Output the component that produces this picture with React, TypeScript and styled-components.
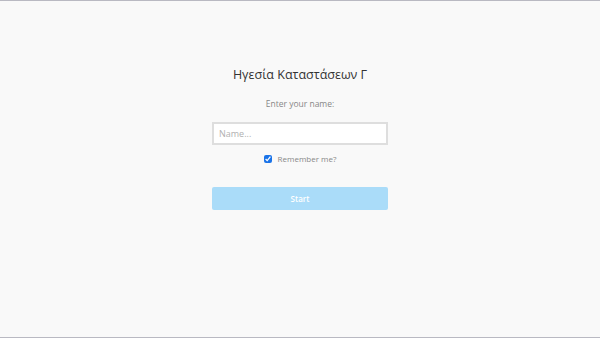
import React from "react";
import styled, { createGlobalStyle } from "styled-components";

const Global = createGlobalStyle`
  html, body { margin: 0; padding: 0; background: #f9f9f9; }
  * { box-sizing: border-box; }
`;

const Page = styled.div`
  height: 338px;
  border-top: 1px solid #b9b9c2;
  border-bottom: 1px solid #b9b9c2;
  background: #f9f9f9;
  display: flex;
  justify-content: center;
  font-family: "Open Sans", "Noto Sans", sans-serif;
`;

const Form = styled.div`
  width: 176px;
  padding-top: 65px;
  display: flex;
  flex-direction: column;
  align-items: center;
`;

const Title = styled.h1`
  margin: 0;
  font-size: 12.5px;
  line-height: 18px;
  font-weight: 400;
  color: #333;
  white-space: nowrap;
`;

const Label = styled.div`
  margin-top: 14px;
  font-size: 8.5px;
  line-height: 12px;
  color: #888;
`;

const Input = styled.input`
  margin-top: 12px;
  width: 176px;
  height: 23px;
  border: 2px solid #dedede;
  background: #fff;
  padding: 0 5px;
  font-family: inherit;
  font-size: 9px;
  color: #333;
  outline: none;
  &::placeholder { color: #b0b0b0; }
`;

const CheckRow = styled.label`
  margin-top: 8px;
  display: flex;
  align-items: center;
  gap: 6px;
  font-size: 8px;
  line-height: 12px;
  color: #888;
`;

const Check = styled.input`
  margin: 0;
  width: 8px;
  height: 8px;
  accent-color: #1a73e8;
`;

const Button = styled.button`
  margin-top: 22px;
  width: 176px;
  height: 23px;
  border: none;
  border-radius: 2px;
  background: #aadcf9;
  color: #fff;
  font-family: inherit;
  font-size: 8px;
  font-weight: 600;
`;

export default function App() {
  return (
    <>
      <Global />
      <Page>
        <Form>
          <Title>Ηγεσία Καταστάσεων Γ</Title>
          <Label>Enter your name:</Label>
          <Input placeholder="Name..." />
          <CheckRow>
            <Check type="checkbox" defaultChecked />
            Remember me?
          </CheckRow>
          <Button>Start</Button>
        </Form>
      </Page>
    </>
  );
}
